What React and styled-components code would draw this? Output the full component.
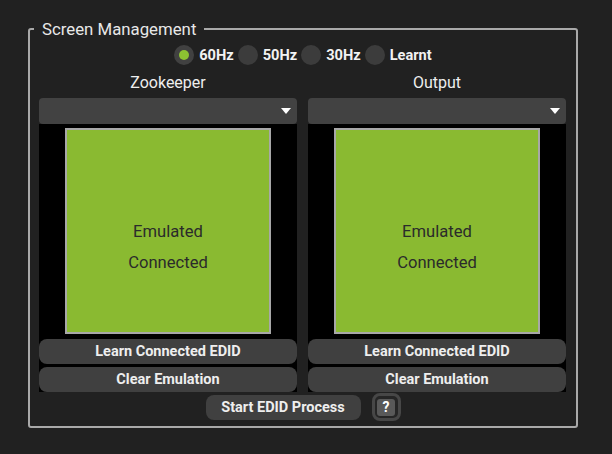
import React from "react";
import styled, { createGlobalStyle } from "styled-components";

const GlobalStyle = createGlobalStyle`
  html, body { margin: 0; padding: 0; background: #212121; }
  body { font-family: Roboto, "Liberation Sans", Arial, sans-serif; color: #eee; }
`;

const Page = styled.div`
  padding: 20px 0 0 28px;
`;

const Fieldset = styled.fieldset`
  box-sizing: border-box;
  width: 550px;
  margin: 0;
  padding: 0 9px 5px;
  border: 2px solid #a9a9a9;
  border-radius: 3px;
  min-width: 0;
`;

const Legend = styled.legend`
  margin-left: -5px;
  padding: 0 8px;
  font-size: 16.8px;
  line-height: 18px;
  color: #e8e8e8;
`;

const RadioRow = styled.div`
  display: flex;
  justify-content: center;
  align-items: center;
  gap: 4px;
  margin-top: 7px;
  height: 20px;
`;

const RadioItem = styled.label`
  display: flex;
  align-items: center;
  gap: 5px;
  font-size: 14.6px;
  font-weight: 700;
  color: #f2f2f2;
`;

const RadioDot = styled.span`
  width: 20px;
  height: 20px;
  border-radius: 50%;
  background: ${(p) => (p.$on ? "#414141" : "#3c3c3c")};
  display: flex;
  align-items: center;
  justify-content: center;
  &::after {
    content: "";
    display: ${(p) => (p.$on ? "block" : "none")};
    width: 10px;
    height: 10px;
    border-radius: 50%;
    background: #8cc232;
  }
`;

const Columns = styled.div`
  display: grid;
  grid-template-columns: 258px 258px;
  column-gap: 11px;
  margin-top: 7px;
`;

const Column = styled.div`
  display: flex;
  flex-direction: column;
`;

const Heading = styled.div`
  text-align: center;
  font-size: 16px;
  line-height: 22px;
  color: #eee;
  margin-bottom: 4px;
`;

const Select = styled.div`
  position: relative;
  height: 26px;
  background: #424242;
  border-radius: 4px;
  &::after {
    content: "";
    position: absolute;
    right: 6px;
    top: 10px;
    border-left: 5px solid transparent;
    border-right: 5px solid transparent;
    border-top: 6px solid #fff;
  }
`;

const Panel = styled.div`
  background: #000;
  display: flex;
  flex-direction: column;
  align-items: stretch;
  padding-top: 4px;
`;

const Screen = styled.div`
  box-sizing: border-box;
  align-self: center;
  width: 206px;
  height: 206px;
  border: 2px solid #a8a8a8;
  background: #8aba31;
  display: flex;
  flex-direction: column;
  align-items: center;
  justify-content: center;
  padding-top: 32px;
  font-size: 16.6px;
  line-height: 31px;
  color: #2b2b2b;
  margin-bottom: 5px;
`;

const Button = styled.button`
  box-sizing: border-box;
  height: 25px;
  width: ${(p) => p.$width || "100%"};
  border: none;
  border-radius: 8px;
  background: #404040;
  color: #eee;
  font-family: inherit;
  font-size: 14.5px;
  font-weight: 700;
  padding: 0;
  & + & {
    margin-top: 3px;
  }
`;

const Footer = styled.div`
  display: flex;
  justify-content: center;
  align-items: center;
  gap: 11px;
  margin-top: 1px;
  height: 28px;
`;

const HelpButton = styled.div`
  box-sizing: border-box;
  width: 29px;
  height: 28px;
  border: 3px solid #474747;
  border-radius: 8px;
  background: #262626;
  display: flex;
  align-items: center;
  justify-content: center;
`;

const HelpInner = styled.span`
  width: 18px;
  height: 17px;
  border-radius: 3px;
  background: #595959;
  color: #fff;
  font-size: 14px;
  font-weight: 700;
  line-height: 17px;
  text-align: center;
`;

const rates = [
  { label: "60Hz", on: true },
  { label: "50Hz" },
  { label: "30Hz" },
  { label: "Learnt" },
];

function ScreenColumn({ title }) {
  return (
    <Column>
      <Heading>{title}</Heading>
      <Select />
      <Panel>
        <Screen>
          <div>Emulated</div>
          <div>Connected</div>
        </Screen>
        <Button>Learn Connected EDID</Button>
        <Button>Clear Emulation</Button>
      </Panel>
    </Column>
  );
}

export default function App() {
  return (
    <>
      <GlobalStyle />
      <Page>
        <Fieldset>
          <Legend>Screen Management</Legend>
          <RadioRow>
            {rates.map((r) => (
              <RadioItem key={r.label}>
                <RadioDot $on={r.on} />
                {r.label}
              </RadioItem>
            ))}
          </RadioRow>
          <Columns>
            <ScreenColumn title="Zookeeper" />
            <ScreenColumn title="Output" />
          </Columns>
          <Footer>
            <Button $width="155px">Start EDID Process</Button>
            <HelpButton>
              <HelpInner>?</HelpInner>
            </HelpButton>
          </Footer>
        </Fieldset>
      </Page>
    </>
  );
}
